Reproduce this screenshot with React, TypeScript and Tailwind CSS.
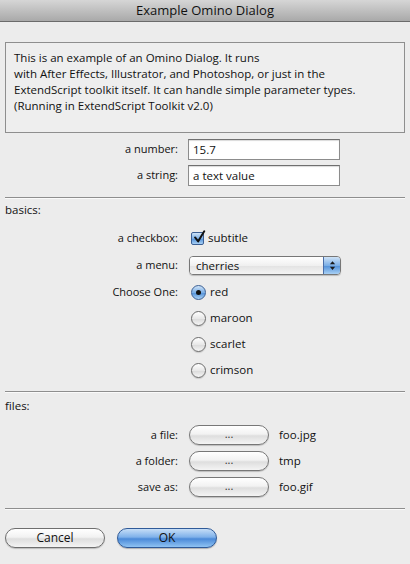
import React from "react";

const font = { fontFamily: '"Lucida Grande", "Open Sans", "DejaVu Sans", sans-serif' };

function Label({ children }: { children: React.ReactNode }) {
  return <div className="w-[183px] shrink-0 pr-[10px] text-right text-[11px] text-[#111]">{children}</div>;
}

function TextField({ value }: { value: string }) {
  return (
    <div className="flex h-[21px] w-[152px] items-center border border-[#8c8c8c] border-t-[#6f6f6f] bg-white px-[4px] text-[11.5px] text-[#111] shadow-[inset_0_1px_1px_rgba(0,0,0,0.15)]">
      {value}
    </div>
  );
}

function Radio({ checked, label }: { checked?: boolean; label: string }) {
  return (
    <div className="flex h-[26px] items-center gap-[4px]">
      {checked ? (
        <div className="flex h-[15px] w-[15px] items-center justify-center rounded-full border border-[#3b5f94] bg-[linear-gradient(#cfe3f7,#7aaee6_50%,#4f8fd8_51%,#a8d0f5)]">
          <div className="h-[5px] w-[5px] rounded-full bg-[#111]" />
        </div>
      ) : (
        <div className="h-[15px] w-[15px] rounded-full border border-[#6b6b6b] bg-[linear-gradient(#ffffff,#e8e8e8_50%,#d9d9d9_51%,#f6f6f6)] shadow-[0_1px_1px_rgba(0,0,0,0.15)]" />
      )}
      <span className="text-[11.5px] text-[#111]">{label}</span>
    </div>
  );
}

function FileRow({ label, value }: { label: string; value: string }) {
  return (
    <div className="flex h-[26px] items-center">
      <Label>{label}</Label>
      <div className="ml-[1px] flex h-[20px] w-[80px] items-center justify-center rounded-full border border-[#777] bg-[linear-gradient(#ffffff,#f2f2f2_45%,#dedede_55%,#f4f4f4)] pb-[3px] text-[11px] leading-none text-[#333] shadow-[0_1px_1px_rgba(0,0,0,0.2)]">
        ...
      </div>
      <span className="ml-[10px] text-[11.5px] text-[#111]">{value}</span>
    </div>
  );
}

function Separator() {
  return <div className="h-px bg-[#8e8e8e] shadow-[0_1px_0_#fafafa]" />;
}

export default function App() {
  return (
    <div className="h-[564px] w-[410px] overflow-hidden bg-[#ececec]" style={font}>
      <div className="flex h-[22px] items-center justify-center border-b border-[#6b6b6b] bg-[linear-gradient(#d6d6d6,#a9a9a9)] text-[13px] text-[#111]">
        Example Omino Dialog
      </div>

      <div className="px-[5px]">
        <div className="mt-[20px] h-[91px] border border-[#8e8e8e] bg-[#eeeeee] px-[8px] pt-[7px] text-[11.5px] leading-[16px] text-[#111]">
          This is an example of an Omino Dialog. It runs
          <br />
          with After Effects, Illustrator, and Photoshop, or just in the
          <br />
          ExtendScript toolkit itself. It can handle simple parameter types.
          <br />
          (Running in ExtendScript Toolkit v2.0)
        </div>

        <div className="mt-[6px] flex flex-col gap-[5px]">
          <div className="flex items-center">
            <Label>a number:</Label>
            <TextField value="15.7" />
          </div>
          <div className="flex items-center">
            <Label>a string:</Label>
            <TextField value="a text value" />
          </div>
        </div>

        <div className="mt-[11px]">
          <Separator />
        </div>

        <div className="mt-[5px] text-[11.5px] leading-[14px] text-[#111]">basics:</div>

        <div className="mt-[13px] flex h-[16px] items-center">
          <Label>a checkbox:</Label>
          <div className="ml-[3px] flex items-center gap-[4px]">
            <div className="relative h-[13px] w-[13px] rounded-[2px] border border-[#3b5f94] bg-[linear-gradient(#cfe3f7,#7aaee6_50%,#4f8fd8_51%,#a8d0f5)]">
              <svg viewBox="0 0 16 16" className="absolute -top-[3px] left-[0px] h-[14px] w-[14px]">
                <path d="M3.5 8.5 L7 13 L14 1.5" fill="none" stroke="#111" strokeWidth="2.2" strokeLinecap="round" strokeLinejoin="round" />
              </svg>
            </div>
            <span className="text-[11.5px] text-[#111]">subtitle</span>
          </div>
        </div>

        <div className="mt-[10px] flex h-[19px] items-center">
          <Label>a menu:</Label>
          <div className="ml-[1px] flex h-[19px] w-[152px] overflow-hidden rounded-[4px] border border-[#777] shadow-[0_1px_1px_rgba(0,0,0,0.2)]">
            <div className="flex flex-1 items-center bg-[linear-gradient(#ffffff,#f0f0f0_50%,#e2e2e2_51%,#f4f4f4)] pl-[6px] text-[11.5px] text-[#111]">
              cherries
            </div>
            <div className="flex w-[17px] items-center justify-center border-l border-[#4a6ea8] bg-[linear-gradient(#cfe3f7,#7aaee6_50%,#4f8fd8_51%,#a8d0f5)]">
              <svg viewBox="0 0 8 12" className="h-[11px] w-[7px]">
                <path d="M4 1 L7 4.5 L1 4.5 Z M4 11 L7 7.5 L1 7.5 Z" fill="#1a1a1a" />
              </svg>
            </div>
          </div>
        </div>

        <div className="mt-[4px] flex">
          <div className="flex h-[26px] items-center">
            <Label>Choose One:</Label>
          </div>
          <div className="ml-[3px] flex flex-col">
            <Radio checked label="red" />
            <Radio label="maroon" />
            <Radio label="scarlet" />
            <Radio label="crimson" />
          </div>
        </div>

        <div className="mt-[8px]">
          <Separator />
        </div>

        <div className="mt-[7px] text-[11.5px] leading-[14px] text-[#111]">files:</div>

        <div className="mt-[9px] flex flex-col">
          <FileRow label="a file:" value="foo.jpg" />
          <FileRow label="a folder:" value="tmp" />
          <FileRow label="save as:" value="foo.gif" />
        </div>

        <div className="mt-[8px]">
          <Separator />
        </div>

        <div className="mt-[19px] flex gap-[12px]">
          <div className="flex h-[20px] w-[100px] items-center justify-center rounded-full border border-[#6e6e6e] bg-[linear-gradient(#ffffff,#f2f2f2_45%,#dedede_55%,#f4f4f4)] text-[12px] text-[#111] shadow-[0_1px_1px_rgba(0,0,0,0.2)]">
            Cancel
          </div>
          <div className="flex h-[20px] w-[100px] items-center justify-center rounded-full border border-[#2f5a98] bg-[linear-gradient(#c6def7,#7fb1ea_45%,#4b8ad8_55%,#8fc3f3)] text-[12px] text-[#111] shadow-[0_1px_1px_rgba(0,0,0,0.25)]">
            OK
          </div>
        </div>
      </div>
    </div>
  );
}
